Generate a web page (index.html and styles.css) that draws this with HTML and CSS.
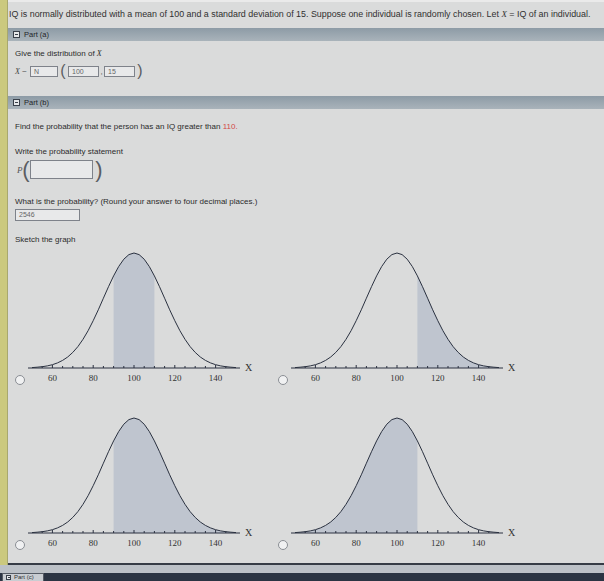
FILE: index.html
```html
<!DOCTYPE html>
<html>
<head>
<meta charset="utf-8">
<title>IQ normal distribution</title>
<link rel="stylesheet" href="styles.css">
</head>
<body>
<div class="page">
  <div class="strip"></div>
  <div class="main">
    <p class="intro">IQ is normally distributed with a mean of 100 and a standard deviation of 15. Suppose one individual is randomly chosen. Let <i class="math">X</i> = IQ of an individual.</p>

    <section class="part">
      <div class="part-head"><span class="toggle"></span><span>Part (a)</span></div>
      <div class="part-body body-a">
        <p class="line">Give the distribution of <i class="math">X</i></p>
        <div class="dist-row">
          <span class="var"><i class="math">X</i> ~</span>
          <span class="box box-n">N</span>
          <span class="paren paren-open">(</span>
          <span class="box box-num">100</span>
          <span class="comma">,</span>
          <span class="box box-num">15</span>
          <span class="paren paren-close">)</span>
        </div>
      </div>
    </section>

    <section class="part part-b">
      <div class="part-head"><span class="toggle"></span><span>Part (b)</span></div>
      <div class="part-body body-b">
        <p class="line">Find the probability that the person has an IQ greater than <span class="red">110.</span></p>
        <p class="line gap-15">Write the probability statement</p>
        <div class="prob-row">
          <span class="p-var">P</span>
          <span class="paren big">(</span>
          <span class="box box-p"></span>
          <span class="paren big close">)</span>
        </div>
        <p class="line gap-18">What is the probability? (Round your answer to four decimal places.)</p>
        <div class="box box-ans">2546</div>
        <p class="line gap-14">Sketch the graph</p>

        <div class="graphs">
          <div class="option">
            <span class="radio"></span>
            <svg class="graph" viewBox="5 0 240 135">
              <use href="#bell-area" class="shade" clip-path="url(#clip-mid)"/>
              <use href="#axis"/>
              <use href="#bell" class="curve"/>
              <text class="tick-label" x="32.4" y="131">60</text>
              <text class="tick-label" x="73.2" y="131">80</text>
              <text class="tick-label" x="114" y="131">100</text>
              <text class="tick-label" x="154.8" y="131">120</text>
              <text class="tick-label" x="195.6" y="131">140</text>
              <text class="axis-x" x="225" y="121">X</text>
            </svg>
          </div>
          <div class="option">
            <span class="radio"></span>
            <svg class="graph" viewBox="5 0 240 135">
              <use href="#bell-area" class="shade" clip-path="url(#clip-right)"/>
              <use href="#axis"/>
              <use href="#bell" class="curve"/>
              <text class="tick-label" x="32.4" y="131">60</text>
              <text class="tick-label" x="73.2" y="131">80</text>
              <text class="tick-label" x="114" y="131">100</text>
              <text class="tick-label" x="154.8" y="131">120</text>
              <text class="tick-label" x="195.6" y="131">140</text>
              <text class="axis-x" x="225" y="121">X</text>
            </svg>
          </div>
          <div class="option">
            <span class="radio"></span>
            <svg class="graph" viewBox="5 0 240 135">
              <use href="#bell-area" class="shade" clip-path="url(#clip-gt90)"/>
              <use href="#axis"/>
              <use href="#bell" class="curve"/>
              <text class="tick-label" x="32.4" y="131">60</text>
              <text class="tick-label" x="73.2" y="131">80</text>
              <text class="tick-label" x="114" y="131">100</text>
              <text class="tick-label" x="154.8" y="131">120</text>
              <text class="tick-label" x="195.6" y="131">140</text>
              <text class="axis-x" x="225" y="121">X</text>
            </svg>
          </div>
          <div class="option">
            <span class="radio"></span>
            <svg class="graph" viewBox="5 0 240 135">
              <use href="#bell-area" class="shade" clip-path="url(#clip-lt110)"/>
              <use href="#axis"/>
              <use href="#bell" class="curve"/>
              <text class="tick-label" x="32.4" y="131">60</text>
              <text class="tick-label" x="73.2" y="131">80</text>
              <text class="tick-label" x="114" y="131">100</text>
              <text class="tick-label" x="154.8" y="131">120</text>
              <text class="tick-label" x="195.6" y="131">140</text>
              <text class="axis-x" x="225" y="121">X</text>
            </svg>
          </div>
        </div>
      </div>
    </section>
  </div>
</div>
<div class="footer">
  <div class="foot-band"></div>
  <div class="foot-bar"><span class="foot-tab"><span class="toggle small"></span>Part (c)</span></div>
</div>

<svg class="defs" aria-hidden="true">
  <defs>
    <path id="bell" d="M12,117.6 L17.1,117.2 L22.2,116.7 L27.3,115.9 L32.4,114.7 L37.5,112.9 L42.6,110.4 L47.7,107 L52.8,102.4 L57.9,96.6 L63,89.3 L68.1,80.7 L73.2,70.7 L78.3,59.8 L83.4,48.2 L88.5,36.7 L93.6,25.9 L98.7,16.5 L103.8,9.2 L108.9,4.6 L114,3 L119.1,4.6 L124.2,9.2 L129.3,16.5 L134.4,25.9 L139.5,36.7 L144.6,48.2 L149.7,59.8 L154.8,70.7 L159.9,80.7 L165,89.3 L170.1,96.6 L175.2,102.4 L180.3,107 L185.4,110.4 L190.5,112.9 L195.6,114.7 L200.7,115.9 L205.8,116.7 L210.9,117.2 L216,117.6"/>
    <path id="bell-area" d="M12,117.6 L17.1,117.2 L22.2,116.7 L27.3,115.9 L32.4,114.7 L37.5,112.9 L42.6,110.4 L47.7,107 L52.8,102.4 L57.9,96.6 L63,89.3 L68.1,80.7 L73.2,70.7 L78.3,59.8 L83.4,48.2 L88.5,36.7 L93.6,25.9 L98.7,16.5 L103.8,9.2 L108.9,4.6 L114,3 L119.1,4.6 L124.2,9.2 L129.3,16.5 L134.4,25.9 L139.5,36.7 L144.6,48.2 L149.7,59.8 L154.8,70.7 L159.9,80.7 L165,89.3 L170.1,96.6 L175.2,102.4 L180.3,107 L185.4,110.4 L190.5,112.9 L195.6,114.7 L200.7,115.9 L205.8,116.7 L210.9,117.2 L216,117.6 L216,118 L12,118 Z"/>
    <g id="axis" class="axis">
      <path d="M8,118 H220"/>
      <path d="M22.2,118 v-2 M32.4,118 v-3 M42.6,118 v-2 M52.8,118 v-2 M63,118 v-2 M73.2,118 v-3 M83.4,118 v-2 M93.6,118 v-2 M103.8,118 v-2 M114,118 v-3 M124.2,118 v-2 M134.4,118 v-2 M144.6,118 v-2 M154.8,118 v-3 M165,118 v-2 M175.2,118 v-2 M185.4,118 v-2 M195.6,118 v-3 M205.8,118 v-2"/>
    </g>
    <clipPath id="clip-mid"><rect x="93.6" y="0" width="40.8" height="120"/></clipPath>
    <clipPath id="clip-right"><rect x="134.4" y="0" width="90" height="120"/></clipPath>
    <clipPath id="clip-gt90"><rect x="93.6" y="0" width="130" height="120"/></clipPath>
    <clipPath id="clip-lt110"><rect x="0" y="0" width="134.4" height="120"/></clipPath>
  </defs>
</svg>
</body>
</html>
```

FILE: styles.css
```css
* {
  box-sizing: border-box;
  margin: 0;
  padding: 0;
}

body {
  width: 604px;
  height: 581px;
  overflow: hidden;
  background: #dadbdb;
  font-family: "Liberation Sans", Arial, sans-serif;
  font-size: 8px;
  color: #2b2b2b;
}

.page {
  display: flex;
}

.strip {
  width: 8px;
  flex: none;
  background: #cbc97e;
  border-right: 1px solid #a8a86e;
}

.main {
  flex: 1;
  min-width: 0;
  display: flex;
  flex-direction: column;
}

.math {
  font-family: "Liberation Serif", serif;
  font-style: italic;
}

.intro {
  height: 28px;
  padding: 7px 0 0 1px;
  border-top: 2px solid #eaeaea;
  font-size: 8.9px;
  line-height: 10px;
  white-space: nowrap;
  color: #303030;
}

.part-head {
  height: 13px;
  display: flex;
  align-items: center;
  gap: 4px;
  padding-left: 5px;
  background: linear-gradient(#8d9ba6, #a9b3ba);
  font-size: 7.5px;
  color: #1f2428;
}

.toggle {
  width: 7px;
  height: 7px;
  flex: none;
  border: 1px solid #39404a;
  background: #e6e8ea;
  display: flex;
  align-items: center;
  justify-content: center;
}

.toggle::before {
  content: "";
  width: 3px;
  height: 1px;
  background: #39404a;
}

.toggle.small {
  width: 5px;
  height: 5px;
}

.toggle.small::before {
  width: 2px;
}

.part-body {
  padding-left: 7px;
}

.body-a {
  padding-top: 8px;
  padding-bottom: 19px;
}

.body-b {
  padding-top: 13px;
  padding-bottom: 13px;
  border-bottom: 2px solid #363c46;
}

.line {
  line-height: 10px;
  white-space: nowrap;
}

.gap-15 { margin-top: 15px; }
.gap-18 { margin-top: 18px; }
.gap-14 { margin-top: 14px; }

.red {
  color: #d24848;
}

.dist-row {
  margin-top: 6px;
  height: 12px;
  display: flex;
  align-items: center;
}

.var {
  width: 15px;
  color: #444;
}

.box {
  height: 11px;
  border: 1px solid #7e828a;
  background: #e8e9ea;
  font-size: 7px;
  line-height: 9px;
  padding-left: 3px;
  color: #666;
}

.box-n {
  width: 28px;
}

.box-num {
  width: 31px;
}

.paren {
  font-size: 16px;
  line-height: 12px;
  color: #5a5d62;
  font-weight: 300;
  width: 10px;
  text-align: center;
}

.comma {
  width: 5px;
  text-align: center;
  color: #555;
}

.prob-row {
  margin-top: 3px;
  height: 19px;
  display: flex;
  align-items: center;
  padding-left: 2px;
}

.p-var {
  font-family: "Liberation Serif", serif;
  font-style: italic;
  font-size: 9px;
  color: #555;
  width: 5px;
}

.paren.big {
  font-size: 22px;
  line-height: 19px;
  width: 8px;
}

.paren.big.close {
  width: 12px;
}

.box-p {
  width: 63px;
  height: 19px;
}

.box-ans {
  margin-top: 2px;
  width: 65px;
  height: 12px;
  line-height: 10px;
}

.graphs {
  margin-top: 5px;
  display: grid;
  grid-template-columns: 263px 263px;
  row-gap: 30px;
}

.option {
  display: flex;
  align-items: flex-end;
}

.radio {
  width: 10px;
  height: 10px;
  flex: none;
  border-radius: 50%;
  border: 1px solid #8a8e94;
  background: #f0f1f2;
}

.graph {
  display: block;
  width: 240px;
  height: 135px;
}

.shade {
  fill: #bfc5cf;
}

.curve {
  fill: none;
  stroke: #2a3140;
  stroke-width: 1;
  stroke-linejoin: round;
}

.axis {
  fill: none;
  stroke: #2a3140;
  stroke-width: 1;
}

.tick-label {
  font-family: "Liberation Serif", serif;
  font-size: 9px;
  fill: #333;
  text-anchor: middle;
}

.axis-x {
  font-family: "Liberation Serif", serif;
  font-size: 10px;
  fill: #333;
}

.footer {
  display: flex;
  flex-direction: column;
}

.foot-band {
  height: 8px;
  background: #bcc1c7;
}

.foot-bar {
  height: 8px;
  background: #2b3443;
  display: flex;
}

.foot-tab {
  width: 42px;
  margin-left: 2px;
  height: 8px;
  display: flex;
  align-items: center;
  gap: 3px;
  padding-left: 3px;
  background: #c9cdd2;
  border: 1px solid #555b64;
  border-bottom: none;
  font-size: 6px;
  line-height: 7px;
  color: #333;
}

.defs {
  display: block;
  width: 0;
  height: 0;
  overflow: hidden;
}
```
